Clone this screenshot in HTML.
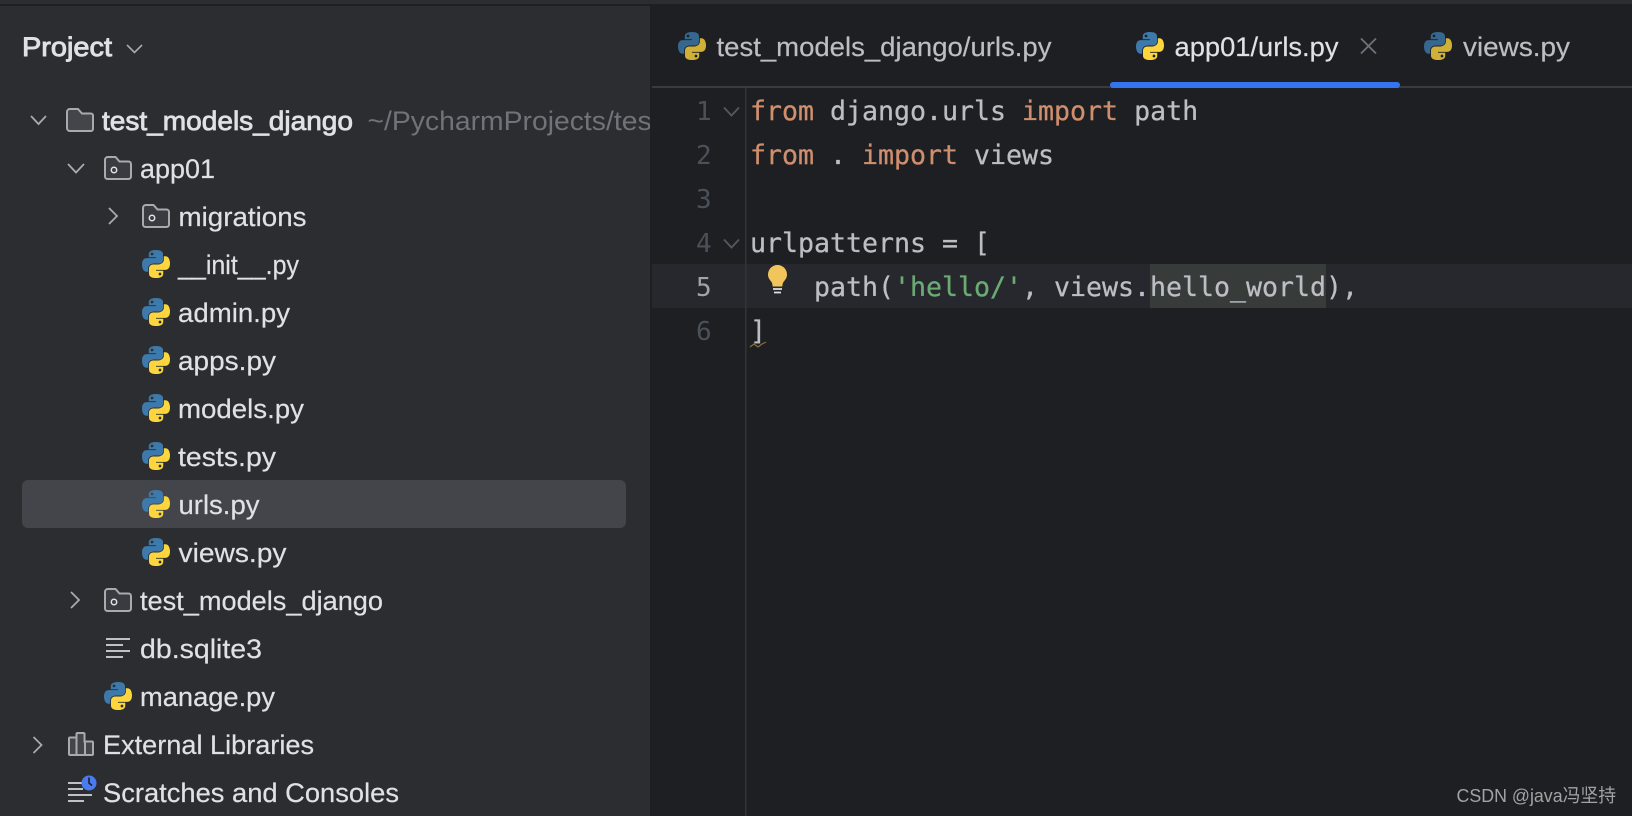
<!DOCTYPE html>
<html><head><meta charset="utf-8"><style>
html,body{margin:0;padding:0;background:#1e1f22;width:1632px;height:816px;overflow:hidden}
svg{display:block}
.u{font-family:"Liberation Sans",sans-serif;font-size:27px;fill:#dfe1e5;stroke:#dfe1e5;stroke-width:.2px}
.b{stroke-width:.9px;font-weight:400}
.c{font-family:"DejaVu Sans Mono","Liberation Mono",monospace;font-size:26.58px;fill:#bcbec4;stroke:#bcbec4;stroke-width:.3px}
.k{fill:#cf8e6d;stroke:#cf8e6d}.s{fill:#6aab73;stroke:#6aab73}
.n{font-family:"DejaVu Sans Mono","Liberation Mono",monospace;font-size:26px;fill:#4b5059}
</style></head><body>
<svg width="1632" height="816" viewBox="0 0 1632 816" xmlns="http://www.w3.org/2000/svg">
<defs>
<path id="hb" fill-rule="evenodd" d="M12 0C7.500 0 5.800 1.500 5.800 3.800V6.200H12V7H4C1.500 7 0 9 0 12.400C0 16 1.500 18.600 4 18.600H5.300V15.600C5.300 13.200 7.800 11.600 10 11.600H14.500C16.600 11.600 18 10 18 8V3.800C18 1.300 16 0 12 0ZM8.600 2.200A1.200 1.200 0 1 1 8.590 2.200Z"/>
<g id="py"><use href="#hb" fill="#3d7aab"/><use href="#hb" fill="#fdd53c" transform="rotate(180 12 12)"/></g>
<clipPath id="cl"><rect x="0" y="90" width="650" height="60"/></clipPath>
<g id="pf"><path d="M1 4a3 3 0 0 1 3-3h7.500l4 4.500h9a2.500 2.500 0 0 1 2.500 2.500v12.500a2.500 2.500 0 0 1-2.500 2.500H3.500a2.500 2.500 0 0 1-2.500-2.500z" fill="#393b40" stroke="#a8aaae" stroke-width="2"/><circle cx="10" cy="14" r="2.700" fill="none" stroke="#dfe1e5" stroke-width="1.500"/></g>
</defs>
<rect width="1632" height="816" fill="#1e1f22"/>
<rect width="1632" height="4" fill="#2b2d30"/>
<rect x="0" y="6" width="650" height="810" fill="#2b2d30"/>
<rect x="22" y="480" width="604" height="48" rx="6" fill="#43454a"/>

<text class="u b" x="22" y="56" textLength="90" lengthAdjust="spacingAndGlyphs">Project</text>
<path d="M127 45l7.500 7.500 7.500-7.500" fill="none" stroke="#a8aaae" stroke-width="1.600"/>

<path d="M31 116l7.500 8 7.500-8" fill="none" stroke="#a8aaae" stroke-width="1.800"/>
<path d="M67 112a3 3 0 0 1 3-3h8l4 4.500h9a2 2 0 0 1 2 2v13.500a2 2 0 0 1-2 2h-21a3 3 0 0 1-3-3z" fill="#43454a" stroke="#a8aaae" stroke-width="2"/>
<text class="u" style="stroke-width:.8px" x="102" y="130" textLength="251" lengthAdjust="spacingAndGlyphs">test_models_django</text>
<text class="u" x="367.500" y="130" style="fill:#6f737a;stroke:none" clip-path="url(#cl)" textLength="292" lengthAdjust="spacingAndGlyphs">~/PycharmProjects/test</text>

<path d="M68 164l8 8.500 8-8.500" fill="none" stroke="#a8aaae" stroke-width="1.800"/>
<use href="#pf" x="104" y="156"/>
<text class="u" x="140" y="178" textLength="75" lengthAdjust="spacingAndGlyphs">app01</text>

<path d="M109 208l8 8-8 8" fill="none" stroke="#a8aaae" stroke-width="1.800"/>
<use href="#pf" x="142" y="204"/>
<text class="u" x="178.500" y="226" textLength="128" lengthAdjust="spacingAndGlyphs">migrations</text>

<use href="#py" transform="translate(142 250) scale(1.167)"/>
<text class="u" x="178" y="274" textLength="121" lengthAdjust="spacingAndGlyphs">__init__.py</text>
<use href="#py" transform="translate(142 298) scale(1.167)"/>
<text class="u" x="178" y="322" textLength="112" lengthAdjust="spacingAndGlyphs">admin.py</text>
<use href="#py" transform="translate(142 346) scale(1.167)"/>
<text class="u" x="178" y="370" textLength="98" lengthAdjust="spacingAndGlyphs">apps.py</text>
<use href="#py" transform="translate(142 394) scale(1.167)"/>
<text class="u" x="178" y="418" textLength="126" lengthAdjust="spacingAndGlyphs">models.py</text>
<use href="#py" transform="translate(142 442) scale(1.167)"/>
<text class="u" x="178" y="466" textLength="98" lengthAdjust="spacingAndGlyphs">tests.py</text>
<use href="#py" transform="translate(142 490) scale(1.167)"/>
<text class="u" x="178.500" y="514" textLength="81" lengthAdjust="spacingAndGlyphs">urls.py</text>
<use href="#py" transform="translate(142 538) scale(1.167)"/>
<text class="u" x="178.500" y="562" textLength="108" lengthAdjust="spacingAndGlyphs">views.py</text>

<path d="M71 592l8 8-8 8" fill="none" stroke="#a8aaae" stroke-width="1.800"/>
<use href="#pf" x="104" y="588"/>
<text class="u" x="140" y="610" textLength="243" lengthAdjust="spacingAndGlyphs">test_models_django</text>

<path d="M106 639h24M106 645h17M106 651h24M106 657h17" stroke="#bfc1c6" stroke-width="2" fill="none"/>
<text class="u" x="140" y="658" textLength="122" lengthAdjust="spacingAndGlyphs">db.sqlite3</text>

<use href="#py" transform="translate(104 682) scale(1.167)"/>
<text class="u" x="140" y="706" textLength="135" lengthAdjust="spacingAndGlyphs">manage.py</text>

<path d="M33.500 737l8 8-8 8" fill="none" stroke="#a8aaae" stroke-width="1.800"/>
<path d="M70 737.500h6.500V734a1 1 0 0 1 1-1h6a1 1 0 0 1 1 1v7.500h7.500a1 1 0 0 1 1 1V754a1 1 0 0 1-1 1H70a1 1 0 0 1-1-1V738.500a1 1 0 0 1 1-1z" fill="#43454a" stroke="#a8aaae" stroke-width="2"/>
<path d="M76.500 737.500V755M85 741.500V755" stroke="#a8aaae" stroke-width="2" fill="none"/>
<text class="u" x="103" y="754" textLength="211" lengthAdjust="spacingAndGlyphs">External Libraries</text>

<path d="M68 783h15M68 789h15M68 795h24M68 801h16" stroke="#bfc1c6" stroke-width="2" fill="none"/>
<circle cx="89" cy="783" r="7.500" fill="#4a7cf0"/>
<path d="M89 777.500v5.500l3 2.500" fill="none" stroke="#1e1f22" stroke-width="1.600"/>
<text class="u" x="103" y="802" textLength="296" lengthAdjust="spacingAndGlyphs">Scratches and Consoles</text>

<rect x="652" y="86" width="980" height="2" fill="#393b40"/>
<rect x="1110" y="82" width="290" height="6" rx="3" fill="#3574f0"/>

<g opacity=".8"><use href="#py" transform="translate(678 32) scale(1.167)"/></g>
<text class="u" x="716.500" y="56" style="fill:#bcbec4;stroke:#bcbec4" textLength="335" lengthAdjust="spacingAndGlyphs">test_models_django/urls.py</text>
<use href="#py" transform="translate(1136 32) scale(1.167)"/>
<text class="u" x="1174.500" y="56" textLength="164" lengthAdjust="spacingAndGlyphs">app01/urls.py</text>
<path d="M1361 38.500l15 15M1376 38.500l-15 15" stroke="#6f737a" stroke-width="1.800" fill="none"/>
<g opacity=".8"><use href="#py" transform="translate(1424 32) scale(1.167)"/></g>
<text class="u" x="1463" y="56" style="fill:#bcbec4;stroke:#bcbec4" textLength="107" lengthAdjust="spacingAndGlyphs">views.py</text>

<rect x="652" y="264" width="980" height="44" fill="#26282e"/>
<rect x="1150" y="264" width="176" height="44" fill="#373b39"/>
<rect x="745" y="88" width="1.500" height="728" fill="#313438"/>

<text class="n" x="696" y="120">1</text>
<text class="n" x="696" y="164">2</text>
<text class="n" x="696" y="208">3</text>
<text class="n" x="696" y="252">4</text>
<text class="n" x="696" y="296" style="fill:#a1a3ab">5</text>
<text class="n" x="696" y="340">6</text>
<path d="M724 107.500l7.500 8 7.500-8M724 239.500l7.500 8 7.500-8" fill="none" stroke="#55585e" stroke-width="1.800"/>

<text class="c" x="750" y="120" xml:space="preserve"><tspan class="k">from</tspan> django.urls <tspan class="k">import</tspan> path</text>
<text class="c" x="750" y="164" xml:space="preserve"><tspan class="k">from</tspan> . <tspan class="k">import</tspan> views</text>
<text class="c" x="750" y="252" xml:space="preserve">urlpatterns = [</text>
<text class="c" x="814" y="296" xml:space="preserve">path(<tspan class="s">'hello/'</tspan>, views.hello_world),</text>
<text class="c" x="750" y="340">]</text>
<path d="M750 347l4-3 4 3 4-3 4-2" fill="none" stroke="#8a7040" stroke-width="1.200"/>

<path d="M777.500 265a9.500 9.500 0 0 0-9.500 9.500c0 3.500 2 5.500 3.500 7.500 .8 1.200 1 2.500 1.200 4.500h9.600c.2-2 .4-3.300 1.200-4.500 1.500-2 3.500-4 3.500-7.500a9.500 9.500 0 0 0-9.500-9.500z" fill="#f2c55c"/>
<path d="M773 289h9M774 292.500h7" stroke="#dfe1e5" stroke-width="1.800" fill="none"/>

<text x="1456.500" y="802" font-family="'Liberation Sans','Noto Sans CJK SC',sans-serif" font-size="18.500" fill="#a3a3a3" textLength="159.500" lengthAdjust="spacingAndGlyphs">CSDN @java冯坚持</text>
</svg>
</body></html>
